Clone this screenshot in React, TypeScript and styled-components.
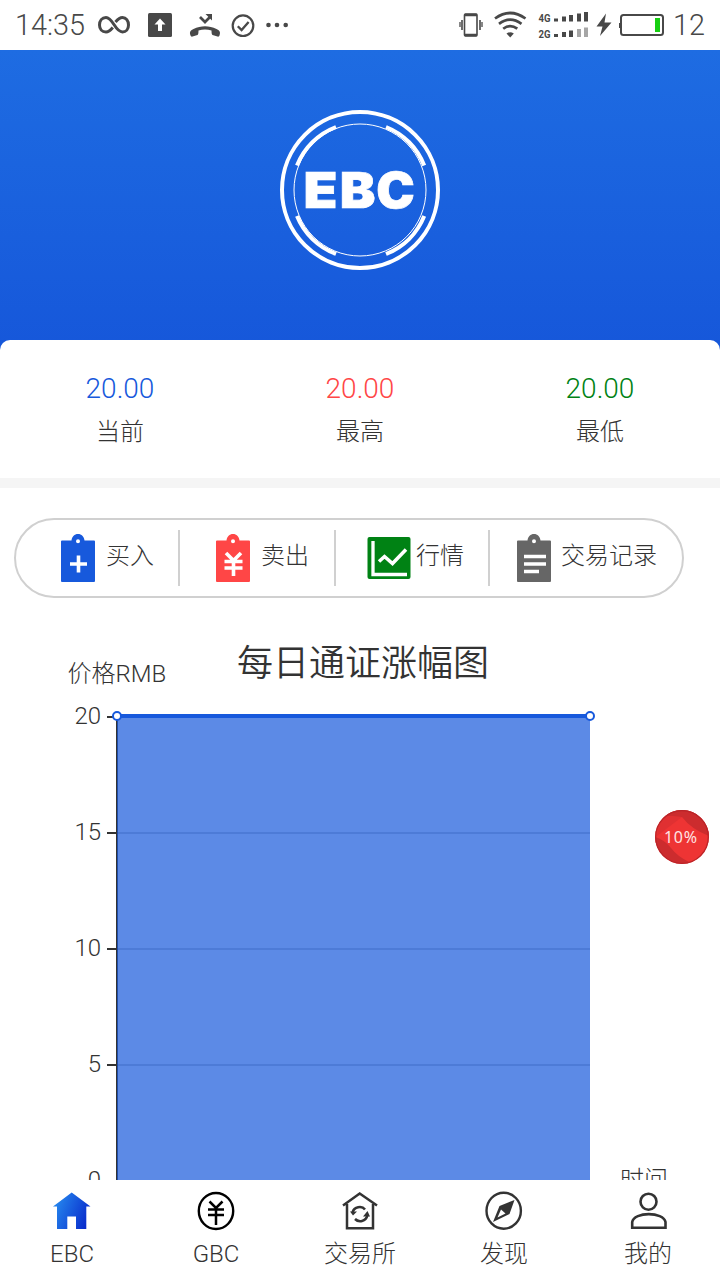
import React from 'react';
import styled, { createGlobalStyle } from 'styled-components';

const GlobalStyle = createGlobalStyle`
  body {
    margin: 0;
    background: #fff;
    color: #333;
    font-family: Roboto, 'Noto Sans CJK SC', sans-serif;
    font-weight: 300;
  }
  svg { display: block; flex: none; }
`;

const Screen = styled.div`
  display: flex;
  flex-direction: column;
  width: 720px;
  height: 1280px;
  overflow: hidden;
  background: #fff;
`;

const StatusBar = styled.header`
  display: flex;
  align-items: center;
  height: 50px;
  flex: none;
  padding: 0 15px;
  box-sizing: border-box;
  color: #484848;
`;

const StatusText = styled.span<{ $width: number }>`
  width: ${(p) => p.$width}px;
  font-size: 28.8px;
  line-height: 50px;
  white-space: nowrap;
`;

const StatusSpacer = styled.div`
  flex: 1;
`;

const Hero = styled.section`
  display: flex;
  justify-content: center;
  height: 300px;
  flex: none;
  box-sizing: border-box;
  padding-top: 60px;
  background: linear-gradient(#1e6ce2, #1657da);
`;

const Prices = styled.section`
  display: grid;
  grid-template-columns: repeat(3, 1fr);
  height: 148px;
  flex: none;
  box-sizing: border-box;
  margin-top: -10px;
  padding-top: 30px;
  border-bottom: 10px solid #f5f5f5;
  border-radius: 10px 10px 0 0;
  background: #fff;
`;

const Price = styled.div`
  display: flex;
  flex-direction: column;
  align-items: center;
`;

const PriceValue = styled.span<{ $color: string }>`
  color: ${(p) => p.$color};
  font-size: 28px;
  line-height: 38px;
`;

const PriceLabel = styled.span`
  margin-top: 6px;
  font-size: 24px;
  line-height: 36px;
`;

const Actions = styled.nav`
  display: flex;
  align-items: center;
  width: 670px;
  height: 80px;
  flex: none;
  box-sizing: border-box;
  margin: 30px 0 0 14px;
  border: 2px solid #d0d0d0;
  border-radius: 40px;
`;

const Action = styled.div<{ $width: number; $pad: number; $gap: number; $last?: boolean }>`
  display: flex;
  align-items: center;
  gap: ${(p) => p.$gap}px;
  width: ${(p) => p.$width}px;
  height: 56px;
  box-sizing: border-box;
  padding-left: ${(p) => p.$pad}px;
  border-right: ${(p) => (p.$last ? 'none' : '2px solid #d0d0d0')};
`;

const ActionLabel = styled.span`
  padding-bottom: 5px;
  font-size: 24px;
  line-height: 36px;
  white-space: nowrap;
`;

const ChartPanel = styled.main`
  height: 582px;
  flex: none;
  overflow: hidden;
`;

const TabBar = styled.footer`
  display: grid;
  grid-template-columns: repeat(5, 1fr);
  height: 100px;
  flex: none;
  background: #fff;
`;

const Tab = styled.div`
  display: flex;
  flex-direction: column;
  align-items: center;
  padding-top: 10px;
`;

const TabLabel = styled.span`
  margin-top: 4px;
  font-size: 24px;
  line-height: 36px;
`;

const ProgressBall = styled.div`
  position: absolute;
  left: 655px;
  top: 810px;
  width: 54px;
  height: 54px;
`;

const StatusLeftIcons = () => (
  <svg width="210" height="50" viewBox="85 0 210 50" fill="none" stroke="#484848">
    <path d="M115.500 22 C118 19 119.500 17.500 122.500 17.500 C126 17.500 128.500 20.800 128.500 25 C128.500 29.200 126 32 122.500 32 C115 32 113 17.500 106 17.500 C102 17.500 99.500 20.800 99.500 25 C99.500 29.200 102 32 106 32 C109 32 110.500 30.300 112.800 27.500" strokeWidth="3" />
    <rect x="148" y="13" width="24" height="24" rx="1.500" fill="#484848" stroke="none" />
    <path d="M160 18.500l5.500 6h-3.500v6.500h-4v-6.500h-3.500z" fill="#fff" stroke="none" />
    <path d="M190.500 35.500C189 31.500 191 30 193.500 29C201 25.200 209 25.200 216.500 29C219 30 221 31.500 219.500 35.500Q219 37 217.500 36.500L212.500 35Q211.500 34.700 211.500 30.500Q205 28.300 198.500 30.500Q198.500 34.700 197.500 35L192.500 36.500Q191 37 190.500 35.500Z" fill="#484848" stroke="none" />
    <path d="M200 17l5 5 6-6" strokeWidth="2.700" />
    <path d="M205.500 14h6.500v6.500z" fill="#484848" stroke="none" />
    <circle cx="243" cy="25.700" r="10.300" strokeWidth="2.200" />
    <path d="M237.800 26.200l3.800 3.800 7-8" strokeWidth="2.300" />
    <g fill="#484848" stroke="none"><circle cx="268.500" cy="25" r="2.300" /><circle cx="277" cy="25" r="2.300" /><circle cx="285.700" cy="25" r="2.300" /></g>
  </svg>
);

const SIGNAL = [[554, 3], [562, 5], [569, 6.5], [577, 8], [584, 9.5]];

const StatusRightIcons = () => (
  <svg width="215" height="50" viewBox="458 0 215 50" fill="none" stroke="#484848">
    <rect x="464.500" y="14" width="12.500" height="22" rx="1" strokeWidth="1.600" />
    <path d="M465 15h12M465 35h12" strokeWidth="2.600" />
    <path d="M462 20v10M480 20v10" strokeWidth="1.600" />
    <path d="M460 22v5M482 22v5" strokeWidth="1.300" />
    <g strokeWidth="2.700">
      <path d="M495 18.500Q510 7.500 525.500 18.500" />
      <path d="M499 23.800Q510 15.500 521.500 23.800" />
      <path d="M503.200 28.700Q510 23.500 517.300 28.700" />
    </g>
    <path d="M506.500 33.500Q510 31 513.800 33.500L510.200 37.500z" fill="#484848" stroke="none" />
    <g fill="#484848" stroke="none" fontFamily="Roboto, sans-serif" fontWeight="700" fontSize="10.500">
      <text x="538.500" y="22" textLength="12" lengthAdjust="spacingAndGlyphs">4G</text>
      <text x="538.500" y="37.500" textLength="12" lengthAdjust="spacingAndGlyphs">2G</text>
      {SIGNAL.map(([x, h]) => <rect key={x} x={x} y={21.5 - h} width="4" height={h} />)}
      {SIGNAL.map(([x, h], i) => <rect key={x} x={x} y={37 - h} width="4" height={h} fill={i > 2 ? '#a6a6a6' : '#484848'} />)}
    </g>
    <path d="M606 13.500l-9.500 13h6l-2.500 9.500 11.500-13.500h-7z" fill="#484848" stroke="none" />
    <path d="M619 23h2v5h-2z" fill="#484848" stroke="none" />
    <rect x="621" y="15" width="42" height="20" rx="2.500" strokeWidth="2" />
    <rect x="655" y="18" width="5" height="14" fill="#17cf12" stroke="none" />
  </svg>
);

const Logo = () => (
  <svg width="160" height="160" viewBox="0 0 160 160" fill="none" stroke="#fff">
    <circle cx="80" cy="80" r="78" strokeWidth="4" />
    <circle cx="80" cy="80" r="66" strokeWidth="1" />
    <g strokeWidth="4">
      <path d="M17 55.500A67.600 67.600 0 0 1 56 17" />
      <path d="M106 17A67.600 67.600 0 0 1 144.200 55.500" />
      <path d="M144.200 106A67.600 67.600 0 0 1 106 144" />
      <path d="M56 144A67.600 67.600 0 0 1 17 106" />
    </g>
    <g fill="#fff" strokeWidth="0.700" fontFamily="Inter, sans-serif" fontWeight="900" fontSize="49.500">
      <text transform="translate(23.500 98) scale(1.120 1)">E</text>
      <text transform="translate(59.800 98) scale(1.080 1)">B</text>
      <text transform="translate(96.300 98) scale(1.040 1)">C</text>
    </g>
  </svg>
);

const Clipboard = ({ color, children }: { color: string; children: React.ReactNode }) => (
  <svg width="36" height="48" viewBox="0 0 36 48" fill="none">
    <path fillRule="evenodd" fill={color} d="M2 6.500h9.500C12 2.500 14.500 0 18 0s6 2.500 6.500 6.500H34q1 0 1 1V47q0 1-1 1H2q-1 0-1-1V7.500q0-1 1-1zM18 5.200a2 2 0 1 0 0 4a2 2 0 1 0 0-4z" />
    <g stroke="#fff" strokeWidth="3.600">{children}</g>
  </svg>
);

const TrendIcon = () => (
  <svg width="44" height="42" viewBox="0 0 44 42" fill="none" stroke="#fff">
    <rect x="0.500" width="43" height="42" rx="2" fill="#008214" stroke="none" />
    <path d="M6 4v33.500h34" strokeWidth="3.300" />
    <path d="M12 24.500l5.500-5 8 7 13.500-14" strokeWidth="3.500" />
  </svg>
);

const Chart = () => (
  <svg width="720" height="582" viewBox="0 598 720 582" fill="#333">
    <text x="363" y="676" fontSize="36" fontWeight="350" textAnchor="middle">每日通证涨幅图</text>
    <text x="67.500" y="682" fontSize="24">价格RMB</text>
    <g stroke="#ccc" strokeWidth="2">
      <path d="M117 833h473M117 949h473M117 1065h473" />
    </g>
    <path d="M117 716v464" stroke="#333" strokeWidth="2" />
    <path d="M107 717h10M107 833h10M107 949h10M107 1065h10" stroke="#333" strokeWidth="2" />
    <rect x="117" y="716" width="473" height="464" fill="#1759dc" fillOpacity="0.7" />
    <path d="M117 716h473" stroke="#1759dc" strokeWidth="4" />
    <g fill="#fff" stroke="#1759dc" strokeWidth="2">
      <circle cx="117" cy="716" r="4" />
      <circle cx="590" cy="716" r="4" />
    </g>
    <g fontSize="24" textAnchor="end">
      <text x="101" y="724">20</text>
      <text x="101" y="840">15</text>
      <text x="101" y="956">10</text>
      <text x="101" y="1072">5</text>
      <text x="101" y="1188">0</text>
    </g>
    <text x="620" y="1188" fontSize="24">时间</text>
  </svg>
);

const HomeIcon = () => (
  <svg width="40" height="42" viewBox="0 0 40 42">
    <defs>
      <linearGradient id="home" x1="0" y1="0.300" x2="1" y2="0.700">
        <stop offset="0.100" stopColor="#2380eb" />
        <stop offset="1" stopColor="#0829cb" />
      </linearGradient>
    </defs>
    <path fill="url(#home)" d="M19.700 2.500L38.500 16.500h-4.200V39H24V26.500h-8.700V39H5V16.500H1z" />
  </svg>
);

const YuanIcon = () => (
  <svg width="40" height="42" viewBox="0 0 40 42" fill="none" stroke="#000">
    <ellipse cx="20" cy="21" rx="17.200" ry="18" strokeWidth="2.400" />
    <path d="M13.500 11.500l6.500 6.500 6.500-6.500M20 18v17M12 19.500h16M12 25h16" strokeWidth="2.500" />
  </svg>
);

const ExchangeIcon = () => (
  <svg width="40" height="42" viewBox="0 0 40 42" fill="none" stroke="#333">
    <path d="M3 15.500L19.700 3.500 37 15.500M7 14v24.300h26V14" strokeWidth="2.500" />
    <path d="M12.500 22.500C14 16.500 22 15.500 25 19.500M27.500 25C26 32 18.500 32.500 15 29" strokeWidth="2.500" />
    <path d="M10 21.500h7l-4 4zM23 26.500L27.500 21l2.500 5.500z" fill="#333" stroke="none" />
  </svg>
);

const CompassIcon = () => (
  <svg width="40" height="42" viewBox="0 0 40 42" fill="none" stroke="#333">
    <ellipse cx="19.700" cy="20.700" rx="17.200" ry="18" strokeWidth="2.400" />
    <path fillRule="evenodd" fill="#333" stroke="none" d="M30.500 10L25.500 24 9 32 15.500 16zM17 19.500L13.500 27.500 21.500 23.500z" />
  </svg>
);

const PersonIcon = () => (
  <svg width="40" height="42" viewBox="0 0 40 42" fill="none" stroke="#333" strokeWidth="2.600">
    <circle cx="20.500" cy="11.700" r="8" />
    <path d="M4.200 37.800V32C6 21.500 35.500 21.500 37.500 32v5.800z" />
  </svg>
);

const TABS = [
  { label: 'EBC', icon: <HomeIcon /> },
  { label: 'GBC', icon: <YuanIcon /> },
  { label: '交易所', icon: <ExchangeIcon /> },
  { label: '发现', icon: <CompassIcon /> },
  { label: '我的', icon: <PersonIcon /> },
];

const PRICES = [
  { label: '当前', color: '#1759dc' },
  { label: '最高', color: '#ff4646' },
  { label: '最低', color: '#008214' },
];

export default function App() {
  return (
    <Screen>
      <GlobalStyle />
      <StatusBar>
        <StatusText $width={70}>14:35</StatusText>
        <StatusLeftIcons />
        <StatusSpacer />
        <StatusRightIcons />
        <StatusText $width={32}>12</StatusText>
      </StatusBar>
      <Hero><Logo /></Hero>
      <Prices>
        {PRICES.map((p) => (
          <Price key={p.label}>
            <PriceValue $color={p.color}>20.00</PriceValue>
            <PriceLabel>{p.label}</PriceLabel>
          </Price>
        ))}
      </Prices>
      <Actions>
        <Action $width={164} $pad={44} $gap={10}>
          <Clipboard color="#1759dc"><path d="M10 30h17M18.500 21.500v17" /></Clipboard>
          <ActionLabel>买入</ActionLabel>
        </Action>
        <Action $width={156} $pad={35} $gap={10}>
          <Clipboard color="#ff4646"><path d="M11 19l7.500 7.500L26 19M18.500 26v16M9.500 27.500h18M9.500 34h18" /></Clipboard>
          <ActionLabel>卖出</ActionLabel>
        </Action>
        <Action $width={154} $pad={31} $gap={5}>
          <TrendIcon />
          <ActionLabel>行情</ActionLabel>
        </Action>
        <Action $width={192} $pad={26} $gap={9} $last>
          <Clipboard color="#666"><path d="M8 22.500h22M8 30h22M8 37.500h15" /></Clipboard>
          <ActionLabel>交易记录</ActionLabel>
        </Action>
      </Actions>
      <ChartPanel><Chart /></ChartPanel>
      <TabBar>
        {TABS.map((t) => (
          <Tab key={t.label}>
            {t.icon}
            <TabLabel>{t.label}</TabLabel>
          </Tab>
        ))}
      </TabBar>
      <ProgressBall>
        <svg width="54" height="54" viewBox="0 0 54 54">
          <circle cx="27" cy="27" r="27" fill="#ee3434" />
          <path d="M10 6L27 7Q36 19 54 26A27 27 0 0 0 10 6z" fill="#cc2c2e" />
          <path d="M0 27Q10 30 16 38T34 52A27 27 0 0 1 0 27z" fill="#cc2c2e" />
          <path d="M2 26L27 7 10 6A27 27 0 0 0 2 26z" fill="#e03032" />
          <circle cx="27" cy="27" r="26.300" fill="none" stroke="#b92529" strokeWidth="1.200" />
          <text x="9" y="33" fill="#ffe3e3" fontFamily="'Noto Sans', sans-serif" fontWeight="400" fontSize="16" textLength="33">10%</text>
        </svg>
      </ProgressBall>
    </Screen>
  );
}
